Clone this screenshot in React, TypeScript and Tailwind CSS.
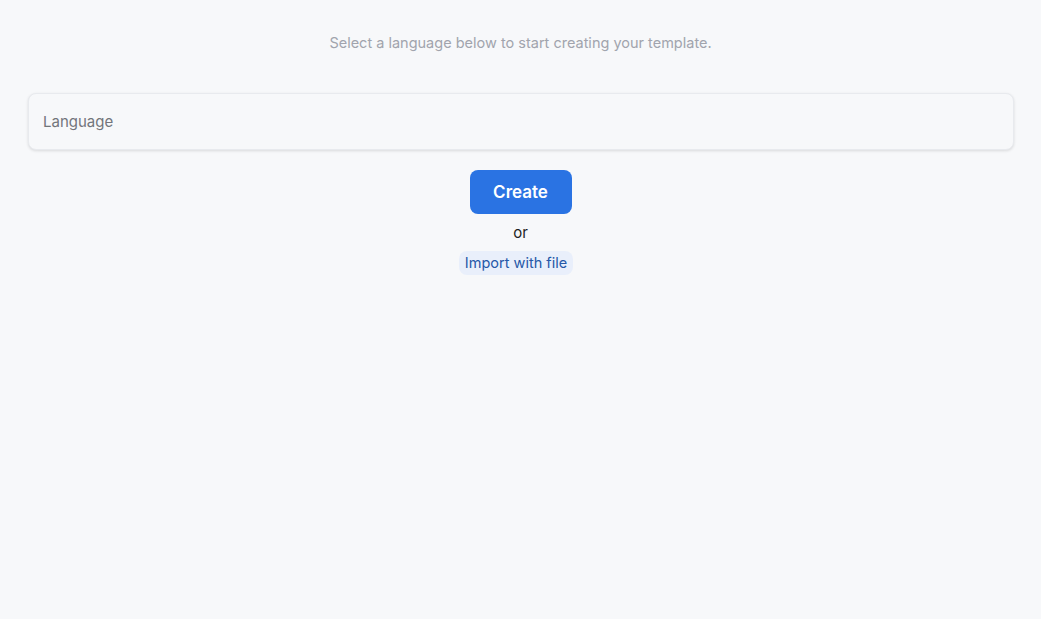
export default function App() {
  return (
    <div
      className="min-h-screen bg-[#f7f8fa] px-7 pt-[33px]"
      style={{ fontFamily: 'Inter, "Liberation Sans", sans-serif' }}
    >
      {/* ── Intro text ─────────────────────────────────────────────── */}
      <p className="text-center text-[14.5px] leading-5 text-[#a1a4ad]">
        Select a language below to start creating your template.
      </p>

      {/* ── Language field ─────────────────────────────────────────── */}
      <div className="-mr-px mt-[40px] flex h-[57px] items-center rounded-[8px] border border-[#e8eaee] bg-[#f7f8fa] px-[14px] pt-[2px] shadow-[0_1px_3px_rgba(0,0,0,0.12)]">
        <span className="text-[15px] text-[#72757b]">Language</span>
      </div>

      {/* ── Actions ────────────────────────────────────────────────── */}
      <div className="mt-[20px] flex flex-col items-center">
        <button className="h-[44px] w-[102px] rounded-[8px] bg-[#2a73e3] pt-[1px] text-[17px] font-semibold text-white">
          Create
        </button>
        <span className="mt-[9px] text-[15px] leading-5 text-[#1d1f24]">or</span>
        <button className="mt-[8px] mr-[9px] rounded-[8px] bg-[#e9effb] px-[6px] py-[2px] text-[14.5px] leading-5 text-[#2558a8]">
          Import with file
        </button>
      </div>
    </div>
  )
}
